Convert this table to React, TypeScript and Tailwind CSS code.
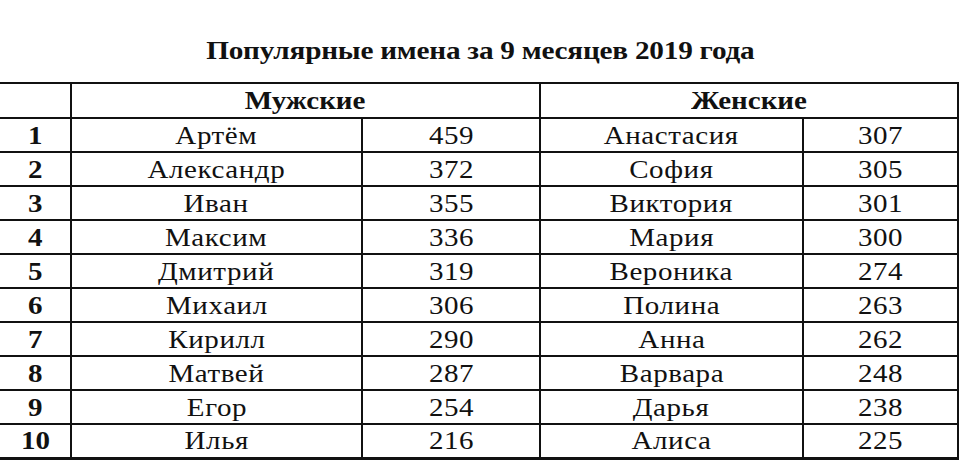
const ROWS = [
  { n: 1, m: "Артём", mc: 459, f: "Анастасия", fc: 307 },
  { n: 2, m: "Александр", mc: 372, f: "София", fc: 305 },
  { n: 3, m: "Иван", mc: 355, f: "Виктория", fc: 301 },
  { n: 4, m: "Максим", mc: 336, f: "Мария", fc: 300 },
  { n: 5, m: "Дмитрий", mc: 319, f: "Вероника", fc: 274 },
  { n: 6, m: "Михаил", mc: 306, f: "Полина", fc: 263 },
  { n: 7, m: "Кирилл", mc: 290, f: "Анна", fc: 262 },
  { n: 8, m: "Матвей", mc: 287, f: "Варвара", fc: 248 },
  { n: 9, m: "Егор", mc: 254, f: "Дарья", fc: 238 },
  { n: 10, m: "Илья", mc: 216, f: "Алиса", fc: 225 },
];

const cell = "border-2 border-[#111] p-0 text-center leading-none";

// the source picture is stretched sideways, so every text gets a little scale-x
function Wide({ children, bold }: { children: React.ReactNode; bold?: boolean }) {
  return (
    <span
      className={`inline-block scale-x-[1.16] text-[25px] ${
        bold ? "font-bold" : "tracking-[0.5px]"
      }`}
    >
      {children}
    </span>
  );
}

export default function App() {
  return (
    <div
      className="w-[960px] h-[466px] overflow-hidden bg-white text-[#111]"
      style={{ fontFamily: '"Liberation Serif", "Times New Roman", serif' }}
    >
      <div className="h-[82px] pt-[38px] text-center leading-none">
        <h1 className="inline-block scale-x-[1.17] text-[25px] font-bold tracking-[-0.2px]">
          Популярные имена за 9 месяцев 2019 года
        </h1>
      </div>

      <table className="w-[958px] border-collapse table-fixed border-b-[3px] border-[#111]">
        <colgroup>
          <col className="w-[71px]" />
          <col className="w-[291px]" />
          <col className="w-[178px]" />
          <col className="w-[263px]" />
          <col className="w-[155px]" />
        </colgroup>
        <thead>
          <tr className="h-[35px]">
            <th className={`${cell} border-l-0`}></th>
            <th colSpan={2} className={cell}>
              <Wide bold>Мужские</Wide>
            </th>
            <th colSpan={2} className={cell}>
              <Wide bold>Женские</Wide>
            </th>
          </tr>
        </thead>
        <tbody>
          {ROWS.map((r) => (
            <tr key={r.n} className="h-[34px]">
              <td className={`${cell} border-l-0`}>
                <Wide bold>{r.n}</Wide>
              </td>
              <td className={cell}>
                <Wide>{r.m}</Wide>
              </td>
              <td className={cell}>
                <Wide>{r.mc}</Wide>
              </td>
              <td className={cell}>
                <Wide>{r.f}</Wide>
              </td>
              <td className={cell}>
                <Wide>{r.fc}</Wide>
              </td>
            </tr>
          ))}
        </tbody>
      </table>

      <p className="pl-[6px] pt-[2px] text-[24px] leading-none">С</p>
    </div>
  );
}
